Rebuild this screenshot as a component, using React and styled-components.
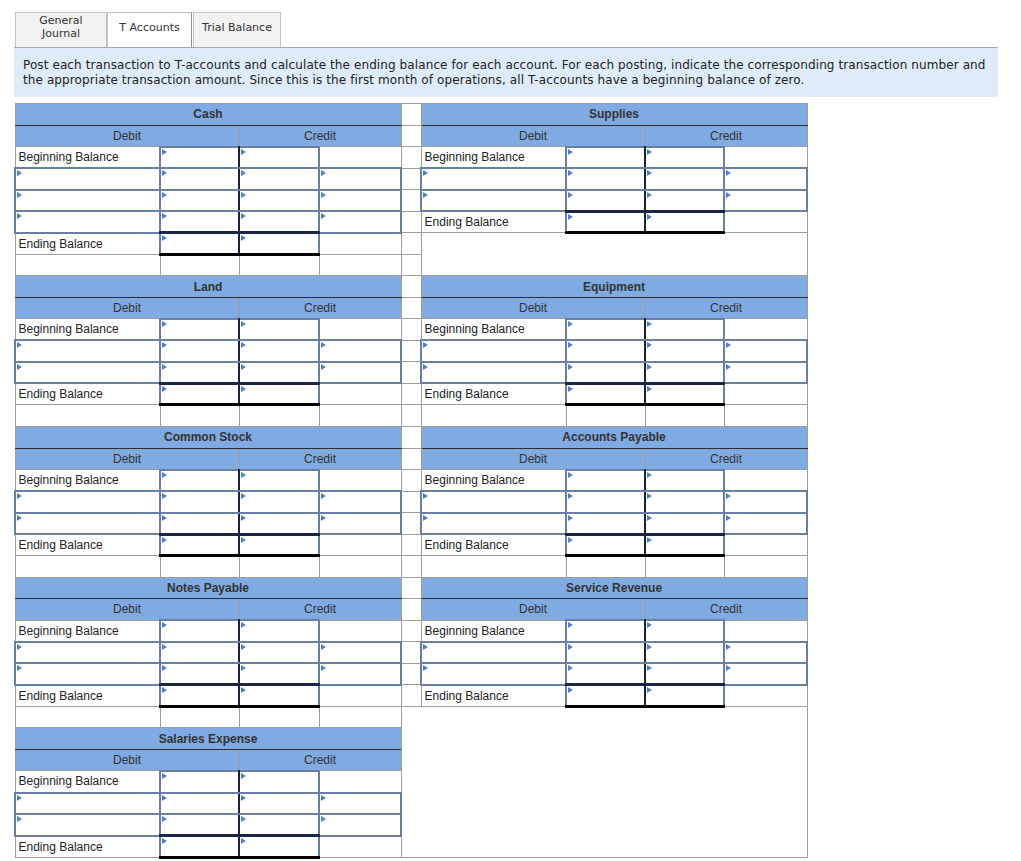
import React from "react";
import styled, { createGlobalStyle } from "styled-components";

const GlobalStyle = createGlobalStyle`
  html, body {
    margin: 0;
    padding: 0;
    background: #ffffff;
  }
  body {
    font-family: "Liberation Sans", Arial, sans-serif;
  }
`;

const Page = styled.div`
  padding: 12px 0 0 14px;
  width: 984px;
`;

const Tabs = styled.div`
  display: flex;
  height: 35px;
  margin-left: 1px;
`;

const Tab = styled.div`
  box-sizing: border-box;
  width: ${(p) => p.$w}px;
  margin-left: ${(p) => p.$gap || 0}px;
  height: 100%;
  padding-bottom: 6px;
  display: flex;
  align-items: center;
  justify-content: center;
  text-align: center;
  background: ${(p) => (p.$active ? "#ffffff" : "#f2f2f2")};
  border: 1px solid #c2c2c2;
  border-right-color: ${(p) => (p.$active ? "#8e8e8e" : "#c2c2c2")};
  border-bottom: none;
  font-family: "DejaVu Sans", Verdana, sans-serif;
  font-size: 11px;
  line-height: 13px;
  color: #333333;
`;

const Intro = styled.div`
  box-sizing: border-box;
  width: 984px;
  height: 50px;
  padding: 10px 9px 0 9px;
  background: #deebf8;
  border-top: 1px solid #a9a9a9;
  font-family: "DejaVu Sans", Verdana, sans-serif;
  font-size: 12px;
  line-height: 15px;
  letter-spacing: 0.1px;
  color: #222222;
`;

const Sheet = styled.table`
  margin-top: 6px;
  width: 792px;
  table-layout: fixed;
  border-collapse: collapse;
  font-size: 12px;
  color: #222222;
`;

const Row = styled.tr`
  height: 21.54px;
`;

const Cell = styled.td`
  padding: 0;
  border: 1px solid #9d9d9d;
  background: #ffffff;
`;

const TitleCell = styled(Cell)`
  background: #80aae2;
  border-bottom: 1px solid #2e2e2e;
  text-align: center;
  font-weight: bold;
  color: #333333;
`;

const HeadCell = styled(Cell)`
  background: #80aae2;
  text-align: center;
  color: #333333;
`;

const Label = styled(Cell)`
  padding-left: 3px;
  white-space: nowrap;
  overflow: hidden;
`;

const Field = styled(Cell)`
  position: relative;
  border: 2px solid #6b7fa4;
  border-right-color: ${(p) => (p.$tline ? "#17213d" : "#6b7fa4")};
  ${(p) =>
    p.$total &&
    `
    border-top: 3px solid #1b2545;
    border-bottom: 3px solid #000000;
  `}

  &::before {
    content: "";
    position: absolute;
    top: 1px;
    left: 1px;
    border-left: 5px solid #4e7fcd;
    border-top: 3px solid transparent;
    border-bottom: 3px solid transparent;
  }
`;

const widths = [145, 79, 80, 82, 20, 145, 79, 79, 83];

const block = (title, posts, tail) => [
  { kind: "title", title },
  { kind: "head" },
  { kind: "begin" },
  ...Array.from({ length: posts }, () => ({ kind: "post" })),
  { kind: "end" },
  ...tail,
];

const blank = { kind: "blank" };
const covered = { kind: "covered" };

const leftRows = [
  ...block("Cash", 3, [blank]),
  ...block("Land", 2, [blank]),
  ...block("Common Stock", 2, [blank]),
  ...block("Notes Payable", 2, [blank]),
  ...block("Salaries Expense", 2, []),
];

const rightRows = [
  ...block("Supplies", 2, [{ kind: "empty", span: 2 }, covered]),
  ...block("Equipment", 2, [blank]),
  ...block("Accounts Payable", 2, [blank]),
  ...block("Service Revenue", 2, []),
  { kind: "big", span: 7 },
  ...Array.from({ length: 6 }, () => covered),
];

function Segment({ row }) {
  switch (row.kind) {
    case "title":
      return <TitleCell colSpan={4}>{row.title}</TitleCell>;
    case "head":
      return (
        <>
          <HeadCell colSpan={2}>Debit</HeadCell>
          <HeadCell colSpan={2}>Credit</HeadCell>
        </>
      );
    case "begin":
      return (
        <>
          <Label>Beginning Balance</Label>
          <Field $tline />
          <Field />
          <Cell />
        </>
      );
    case "post":
      return (
        <>
          <Field />
          <Field $tline />
          <Field />
          <Field />
        </>
      );
    case "end":
      return (
        <>
          <Label>Ending Balance</Label>
          <Field $tline $total />
          <Field $total />
          <Cell />
        </>
      );
    case "blank":
      return (
        <>
          <Cell />
          <Cell />
          <Cell />
          <Cell />
        </>
      );
    case "empty":
      return <Cell colSpan={4} rowSpan={row.span} />;
    default:
      return null;
  }
}

function TAccounts() {
  return (
    <Sheet>
      <colgroup>
        {widths.map((w, i) => (
          <col key={i} style={{ width: w }} />
        ))}
      </colgroup>
      <tbody>
        {leftRows.map((left, i) => {
          const right = rightRows[i];
          const bigStart = right.kind === "big";
          const underBig = i > 28;
          return (
            <Row key={i}>
              <Segment row={left} />
              {bigStart && <Cell colSpan={5} rowSpan={right.span} />}
              {!bigStart && !underBig && <Cell />}
              {!bigStart && <Segment row={right} />}
            </Row>
          );
        })}
      </tbody>
    </Sheet>
  );
}

export default function App() {
  return (
    <>
      <GlobalStyle />
      <Page>
        <Tabs>
          <Tab $w={92}>
            General
            <br />
            Journal
          </Tab>
          <Tab $w={85} $active>
            T Accounts
          </Tab>
          <Tab $w={88} $gap={1}>
            Trial Balance
          </Tab>
        </Tabs>
        <Intro>
          Post each transaction to T-accounts and calculate the ending balance for each account. For each posting,
          indicate the corresponding transaction number and the appropriate transaction amount. Since this is the first
          month of operations, all T-accounts have a beginning balance of zero.
        </Intro>
        <TAccounts />
      </Page>
    </>
  );
}
